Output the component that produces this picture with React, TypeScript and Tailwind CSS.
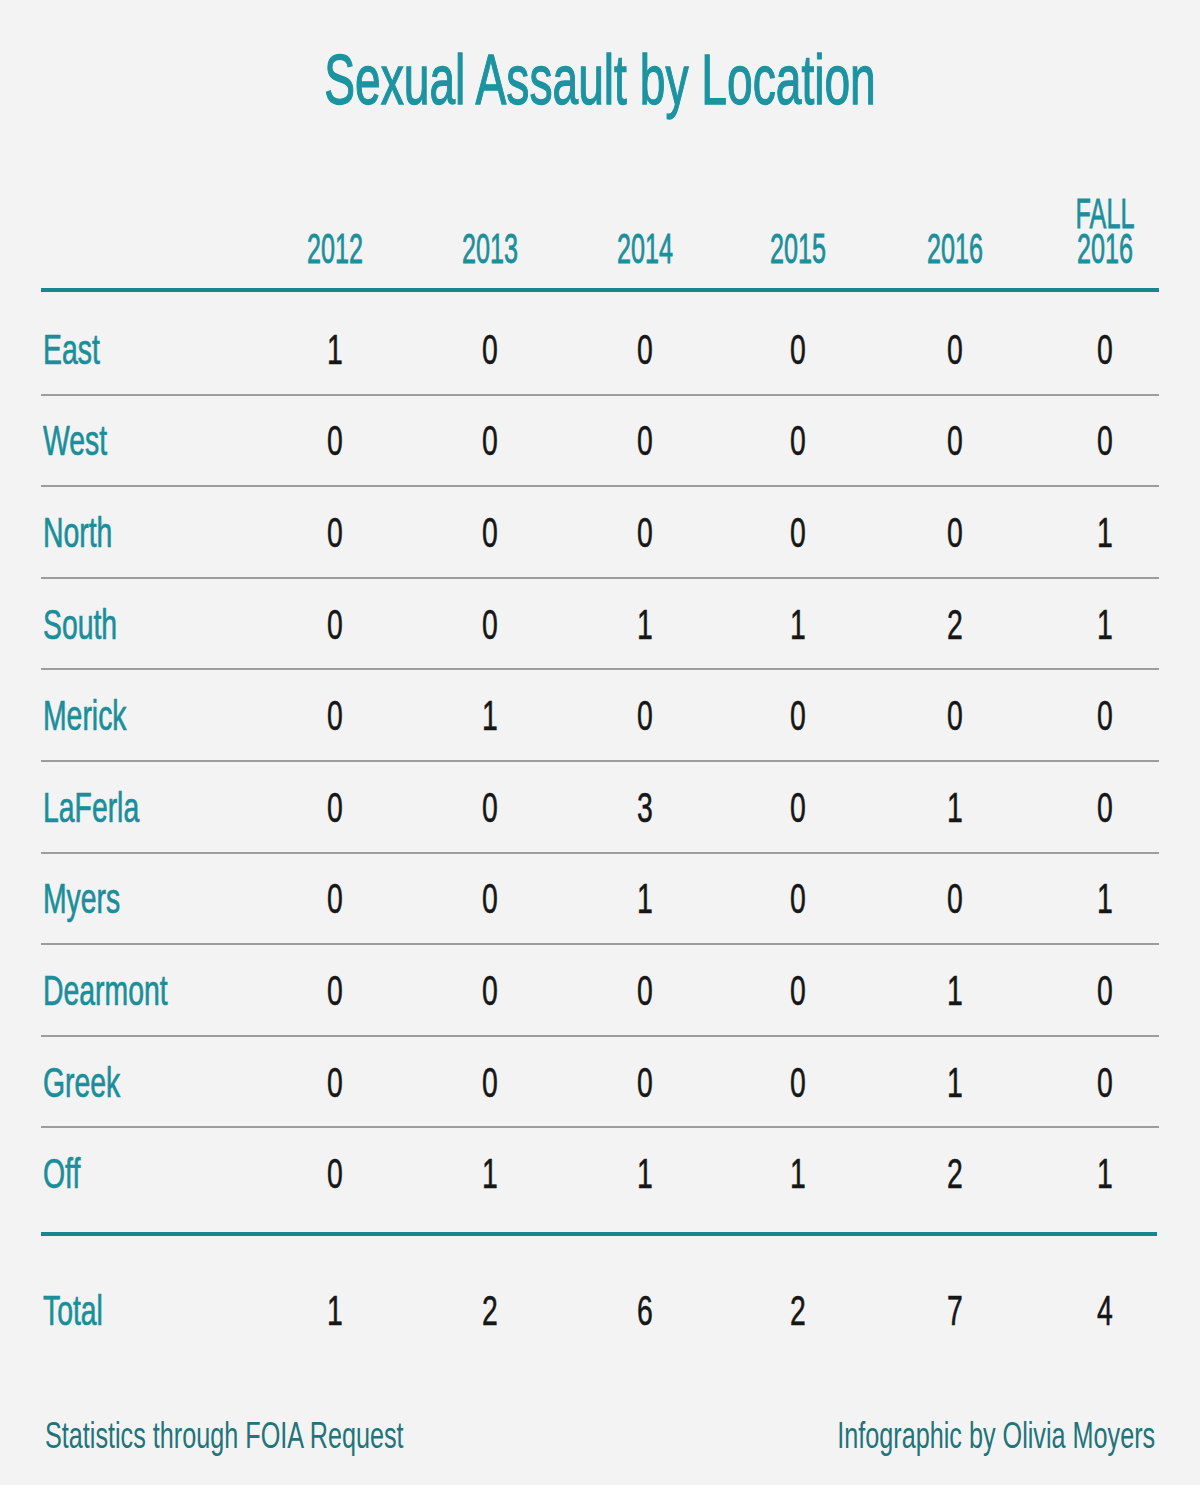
import React from 'react';

type Row = { label: string; values: number[] };

const rows: Row[] = [
  { label: 'East', values: [1, 0, 0, 0, 0, 0] },
  { label: 'West', values: [0, 0, 0, 0, 0, 0] },
  { label: 'North', values: [0, 0, 0, 0, 0, 1] },
  { label: 'South', values: [0, 0, 1, 1, 2, 1] },
  { label: 'Merick', values: [0, 1, 0, 0, 0, 0] },
  { label: 'LaFerla', values: [0, 0, 3, 0, 1, 0] },
  { label: 'Myers', values: [0, 0, 1, 0, 0, 1] },
  { label: 'Dearmont', values: [0, 0, 0, 0, 1, 0] },
  { label: 'Greek', values: [0, 0, 0, 0, 1, 0] },
  { label: 'Off', values: [0, 1, 1, 1, 2, 1] },
];

const totals = [1, 2, 6, 2, 7, 4];

const grid = 'grid grid-cols-[217px_154px_156px_154px_152px_162px_123px] items-center';

// the original typeface is a very narrow DIN-style face; squeeze Liberation Sans to match
// and thicken the strokes a little, since squeezing thins the stems
const Label: React.FC<{ text: string }> = ({ text }) => (
  <div className="origin-left scale-x-[0.66] pl-[3px] text-[43px] leading-[44px] text-[#1a8e9a] [-webkit-text-stroke:0.7px_currentColor]">
    {text}
  </div>
);

const Num: React.FC<{ n: number | string; last?: boolean }> = ({ n, last }) => (
  <div className={last ? 'pl-[15px]' : ''}>
    <div className="scale-x-[0.66] text-center text-[43px] leading-[44px] text-[#161616] [-webkit-text-stroke:0.6px_currentColor]">
      {n}
    </div>
  </div>
);

const yearCls =
  'scale-x-[0.6] text-center text-[42px] leading-[35px] text-[#1b8f9b] [-webkit-text-stroke:0.8px_currentColor]';

export default function App() {
  return (
    <div className="w-[1200px] h-[1485px] overflow-hidden bg-[#f3f3f3] font-['Liberation_Sans',Arial,sans-serif]">
      <div className="mt-[45px] scale-x-[0.65] text-center text-[71px] leading-[70px] text-[#1b93a0] [-webkit-text-stroke:1.3px_currentColor]">
        Sexual Assault by Location
      </div>

      <div className="mx-[41px] mt-[81px] w-[1118px]">
        {/* header */}
        <div className={`${grid} items-end border-b-4 border-[#17878f] pb-[22px]`}>
          <div />
          {['2012', '2013', '2014', '2015', '2016'].map((y) => (
            <div key={y} className={yearCls}>
              {y}
            </div>
          ))}
          <div className="pl-[15px]">
            <div className={yearCls}>FALL</div>
            <div className={yearCls}>2016</div>
          </div>
        </div>

        {/* body */}
        <div className="pt-[12px]">
          {rows.map((r, i) => (
            <div
              key={r.label}
              className={`${grid} box-content h-[89.6px] ${i < rows.length - 1 ? 'border-b-2 border-[#9c9c9c]' : ''}`}
            >
              <Label text={r.label} />
              {r.values.map((v, j) => (
                <Num key={j} n={v} last={j === 5} />
              ))}
            </div>
          ))}
        </div>

        <div className="mt-[14px] h-[4px] w-[1116px] bg-[#17878f]" />

        <div className={`${grid} mt-[29px] h-[90px]`}>
          <Label text="Total" />
          {totals.map((v, j) => (
            <Num key={j} n={v} last={j === 5} />
          ))}
        </div>
      </div>

      <div className="mx-[45px] mt-[61px] flex h-[40px] items-center justify-between text-[36px] leading-[40px] text-[#22737a]">
        <div className="origin-left scale-x-[0.7]">Statistics through FOIA Request</div>
        <div className="origin-right scale-x-[0.7]">Infographic by Olivia Moyers</div>
      </div>
    </div>
  );
}
